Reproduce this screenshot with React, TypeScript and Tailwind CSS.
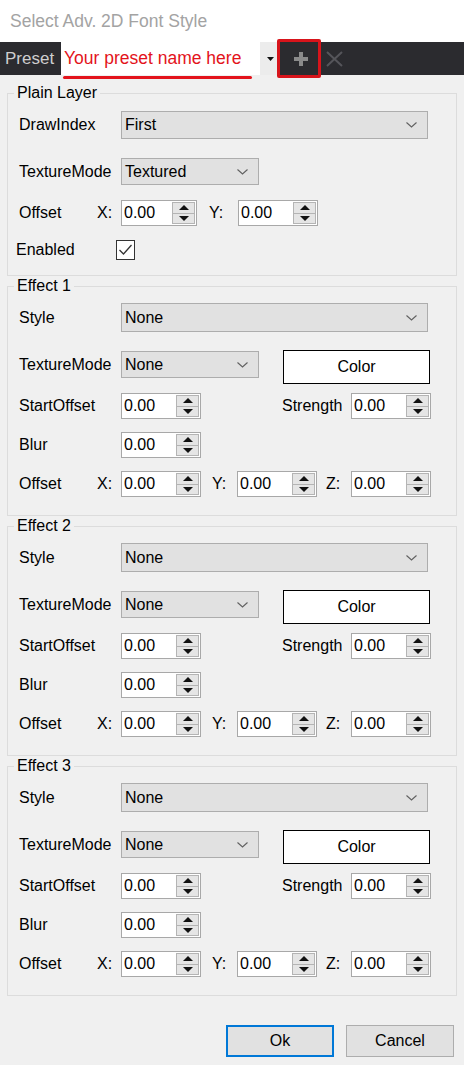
import React from "react";

function Chevron() {
  return (
    <svg width="11" height="6" viewBox="0 0 11 6" className="shrink-0">
      <path d="M0.5 0.5 L5.5 5 L10.5 0.5" fill="none" stroke="#606060" strokeWidth="1.1" />
    </svg>
  );
}

function Select({ value, className }: { value: string; className: string }) {
  return (
    <div
      className={
        "flex items-center justify-between bg-[#e1e1e1] border border-[#adadad] pl-[3px] pr-[10px] " +
        className
      }
    >
      <span>{value}</span>
      <Chevron />
    </div>
  );
}

function Spinner({ className }: { className: string }) {
  return (
    <div className={"flex h-[26px] bg-white border border-[#a8a8a8] " + className}>
      <div className="flex-1 flex items-center pl-[2px]">0.00</div>
      <div className="w-[23px] my-[1px] mr-[1px] flex flex-col bg-[#e5e5e5] border border-[#b4b4b4]">
        <div className="flex-1 flex items-center justify-center border-b border-[#b4b4b4]">
          <svg width="10" height="5" viewBox="0 0 10 5">
            <polygon points="0,5 10,5 5,0" fill="#111" />
          </svg>
        </div>
        <div className="flex-1 flex items-center justify-center">
          <svg width="10" height="5" viewBox="0 0 10 5">
            <polygon points="0,0 10,0 5,5" fill="#111" />
          </svg>
        </div>
      </div>
    </div>
  );
}

function Group({ title, children }: { title: string; children: React.ReactNode }) {
  return (
    <fieldset className="mx-[7px] border border-[#dcdcdc] pl-[11px]">
      <legend className="-ml-[5px] px-[3px] leading-[18px]">{title}</legend>
      {children}
    </fieldset>
  );
}

function Effect({ n }: { n: number }) {
  return (
    <div className="mt-[1px]">
      <Group title={`Effect ${n}`}>
        <div className="mt-[8px] h-[29px] flex items-center">
          <span className="w-[102px]">Style</span>
          <Select value="None" className="w-[307px] h-[29px]" />
        </div>
        <div className="mt-[18px] h-[34px] flex items-start">
          <div className="mt-[1px] h-[27px] flex items-center">
            <span className="w-[102px]">TextureMode</span>
            <Select value="None" className="w-[138px] h-[27px]" />
          </div>
          <button className="ml-[24px] w-[147px] h-[34px] bg-white border border-black flex items-center justify-center">
            Color
          </button>
        </div>
        <div className="mt-[9px] h-[26px] flex items-center">
          <span className="w-[102px]">StartOffset</span>
          <Spinner className="w-[80px]" />
          <span className="ml-[81px] w-[69px]">Strength</span>
          <Spinner className="w-[80px]" />
        </div>
        <div className="mt-[13px] h-[26px] flex items-center">
          <span className="w-[102px]">Blur</span>
          <Spinner className="w-[80px]" />
        </div>
        <div className="mt-[13px] h-[26px] flex items-center">
          <span className="w-[78px]">Offset</span>
          <span className="w-[24px]">X:</span>
          <Spinner className="w-[80px]" />
          <span className="ml-[11px] w-[25px]">Y:</span>
          <Spinner className="w-[80px]" />
          <span className="ml-[9px] w-[25px]">Z:</span>
          <Spinner className="w-[80px]" />
        </div>
        <div className="h-[18px]" />
      </Group>
    </div>
  );
}

export default function App() {
  return (
    <div className="w-[464px] h-[1065px] overflow-hidden bg-[#f0f0f0] text-[16px] text-black font-['Liberation_Sans',Arial,sans-serif]">
      <div className="h-[42px] bg-white flex items-center pl-[10px] text-[17.5px] text-[#a3a3a3]">
        Select Adv. 2D Font Style
      </div>

      <div className="relative h-[33px] bg-[#2b2b2f] flex items-stretch">
        <div className="w-[61px] flex items-center pl-[5px] text-[17px] text-[#cfcfcf]">Preset</div>
        <div className="w-[199px] bg-white flex items-center pl-[3px] text-[17.5px] text-[#e3131b]">
          Your preset name here
        </div>
        <div className="w-[20px] bg-[#ececec] flex items-center justify-center">
          <svg width="7" height="4" viewBox="0 0 7 4">
            <polygon points="0,0 7,0 3.5,4" fill="#111" />
          </svg>
        </div>
        <div className="w-[41px] flex items-center justify-center">
          <svg width="16" height="16" viewBox="0 0 16 16">
            <path d="M8 1 V15 M1 8 H15" stroke="#8a8a8a" strokeWidth="4" />
          </svg>
        </div>
        <div className="w-[27px] flex items-center justify-center">
          <svg width="17" height="16" viewBox="0 0 17 16">
            <path d="M1 1 L16 15 M16 1 L1 15" stroke="#55555a" strokeWidth="2" />
          </svg>
        </div>
        {/* annotations */}
        <div className="absolute left-[63px] top-[34px] w-[189px] h-[3px] rounded-full bg-[#e3131b]" />
        <div className="absolute left-[277px] top-[-3px] w-[44px] h-[39px] border-[3px] border-[#d7141b] rounded-[2px]" />
      </div>

      <div className="mt-[9px]">
        <Group title="Plain Layer">
          <div className="mt-[9px] h-[28px] flex items-center">
            <span className="w-[102px]">DrawIndex</span>
            <Select value="First" className="w-[307px] h-[28px]" />
          </div>
          <div className="mt-[19px] h-[27px] flex items-center">
            <span className="w-[102px]">TextureMode</span>
            <Select value="Textured" className="w-[138px] h-[27px]" />
          </div>
          <div className="mt-[15px] h-[26px] flex items-center">
            <span className="w-[78px]">Offset</span>
            <span className="w-[24px]">X:</span>
            <Spinner className="w-[76px]" />
            <span className="ml-[12px] w-[29px]">Y:</span>
            <Spinner className="w-[80px]" />
          </div>
          <div className="mt-[14px] h-[20px] flex items-center">
            <span className="-ml-[3px] w-[100px]">Enabled</span>
            <div className="w-[19px] h-[20px] bg-white border border-[#333]">
              <svg width="17" height="18" viewBox="0 0 17 18">
                <path d="M2.5 9 L6.5 13 L14.5 4" fill="none" stroke="#333" strokeWidth="1.3" />
              </svg>
            </div>
          </div>
          <div className="h-[15px]" />
        </Group>
      </div>

      <Effect n={1} />
      <Effect n={2} />
      <Effect n={3} />

      <div className="mt-[29px] flex justify-end gap-[12px] pr-[10px]">
        <button className="w-[108px] h-[32px] bg-[#e1e1e1] border-2 border-[#0078d7]">Ok</button>
        <button className="w-[108px] h-[32px] bg-[#e1e1e1] border border-[#adadad]">Cancel</button>
      </div>
    </div>
  );
}
